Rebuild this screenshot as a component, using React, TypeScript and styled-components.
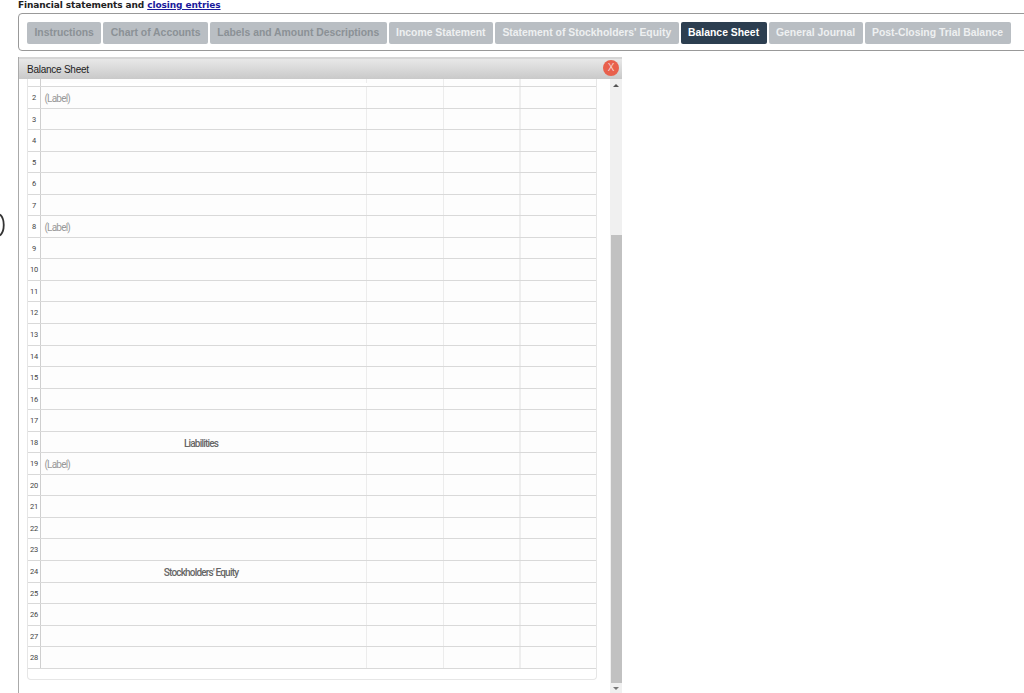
import styled, { createGlobalStyle } from "styled-components";

const GlobalStyle = createGlobalStyle`
  html, body {
    margin: 0;
    padding: 0;
    background: #fff;
    overflow: hidden;
  }
`;

const Page = styled.div`
  position: relative;
  width: 1024px;
  height: 693px;
  overflow: hidden;
  padding-left: 18px;
  box-sizing: border-box;
`;

const Heading = styled.div`
  height: 13px;
  font-family: "DejaVu Sans", sans-serif;
  font-size: 9px;
  font-weight: 700;
  letter-spacing: -0.1px;
  line-height: 10px;
  color: #222;

  a {
    color: #1a1a9c;
  }
`;

const TabBox = styled.div`
  display: flex;
  gap: 2px;
  width: 1030px;
  height: 38px;
  box-sizing: border-box;
  padding: 8px;
  border: 1px solid #999;
  border-radius: 4px;
`;

const Tab = styled.div<{ $active?: boolean; $faded?: boolean }>`
  height: 22px;
  padding: 0 7.45px;
  border-radius: 2px;
  background: ${(p) => (p.$active ? "#2c3e50" : "#b9bec3")};
  color: ${(p) => (p.$active ? "#fff" : p.$faded ? "#eef0f1" : "#8b9196")};
  font-family: "Liberation Sans", sans-serif;
  font-size: 10.4px;
  font-weight: 700;
  line-height: 21px;
  white-space: nowrap;
`;

const Window = styled.div`
  display: flex;
  flex-direction: column;
  width: 604px;
  height: 641px;
  margin-top: 6px;
  box-sizing: border-box;
  border-left: 1px solid #aaa;
  background: #fff;
`;

const TitleBar = styled.div`
  display: flex;
  align-items: center;
  justify-content: space-between;
  flex: none;
  height: 22px;
  padding: 0 3px 0 8px;
  box-sizing: border-box;
  border-top: 2px solid #d6d6d6;
  background: linear-gradient(#e8e8e8, #c9c9c9);
  font-family: "Liberation Sans", sans-serif;
  font-size: 10px;
  letter-spacing: -0.25px;
  color: #222;
`;

const CloseButton = styled.div`
  width: 16px;
  height: 16px;
  margin-top: -3px;
  border-radius: 50%;
  background: #e8604c;
  color: #f6d5cf;
  font-family: "Liberation Sans", sans-serif;
  font-size: 10px;
  line-height: 16px;
  text-align: center;
`;

const WindowBody = styled.div`
  display: flex;
  flex: 1;
  min-height: 0;
  padding-left: 8px;
`;

const Sheet = styled.div`
  width: 571px;
  height: 601px;
  box-sizing: border-box;
  border: 1px solid #e6e6e6;
  border-top: none;
  border-radius: 0 0 4px 4px;
  padding-bottom: 12px;
`;

const Row = styled.div<{ $clipped?: boolean }>`
  display: grid;
  grid-template-columns: 13px 326px 77px 77px 1fr;
  height: ${(p) => (p.$clipped ? "8px" : "21.55px")};
  box-sizing: border-box;
  border-bottom: 1px solid #d9d9d9;
  overflow: hidden;
`;

const NumberCell = styled.div`
  border-right: 1px solid #cfcfcf;
  background: #fff;
  color: #444;
  font-family: "Roboto", sans-serif;
  font-size: 7.5px;
  line-height: 22px;
  text-align: center;
  letter-spacing: -0.3px;
`;

const LabelCell = styled.div<{ $heading?: boolean; $clipped?: boolean }>`
  padding: ${(p) => (p.$heading ? "0 5px 0 0" : "0 0 0 3.5px")};
  background: #fdfdfd;
  border-right: 1px solid #ececec;
  color: ${(p) => (p.$heading ? "#666" : "#999")};
  font-family: "Roboto", sans-serif;
  font-size: 10px;
  font-weight: ${(p) => (p.$heading ? 500 : 400)};
  letter-spacing: -0.8px;
  line-height: ${(p) => (p.$clipped ? "0" : "23px")};
  text-align: ${(p) => (p.$heading ? "center" : "left")};
  white-space: nowrap;
  transform: ${(p) => (p.$clipped ? "translateY(-3px)" : "none")};
`;

const AmountCell = styled.div<{ $wide?: boolean }>`
  background: #fdfdfd;
  border-right: ${(p) => (p.$wide ? "2px solid #eeeeee" : "1px solid #ececec")};
`;

const EndCell = styled.div`
  background: #fdfdfd;
`;

const ScrollTrack = styled.div`
  display: flex;
  flex-direction: column;
  align-items: stretch;
  width: 12px;
  height: 619px;
  margin-left: 13px;
  background: #f0f0f0;
`;

const ScrollArrow = styled.div<{ $down?: boolean }>`
  flex: none;
  width: 0;
  height: 0;
  margin: ${(p) => (p.$down ? "4px auto 0" : "5px auto 0")};
  border-left: 3px solid transparent;
  border-right: 3px solid transparent;
  border-bottom: ${(p) => (p.$down ? "none" : "3px solid #555")};
  border-top: ${(p) => (p.$down ? "3px solid #777" : "none")};
`;

const ScrollSpace = styled.div`
  flex: none;
  height: 148px;
`;

const ScrollThumb = styled.div`
  flex: none;
  height: 448px;
  margin-left: 1px;
  background: #c1c1c1;
`;

const EdgeMark = styled.svg`
  position: absolute;
  left: 0;
  top: 213px;
`;

type RowData = { n: number; label?: string; heading?: boolean };

const rows: RowData[] = Array.from({ length: 27 }, (_, i) => {
  const n = i + 2;
  if (n === 2 || n === 8 || n === 19) return { n, label: "(Label)" };
  if (n === 18) return { n, label: "Liabilities", heading: true };
  if (n === 24) return { n, label: "Stockholders' Equity", heading: true };
  return { n };
});

const tabs = [
  { name: "Instructions" },
  { name: "Chart of Accounts" },
  { name: "Labels and Amount Descriptions" },
  { name: "Income Statement", faded: true },
  { name: "Statement of Stockholders' Equity", faded: true },
  { name: "Balance Sheet", active: true },
  { name: "General Journal", faded: true },
  { name: "Post-Closing Trial Balance", faded: true },
];

export default function App() {
  return (
    <Page>
      <GlobalStyle />
      <EdgeMark width="6" height="24" viewBox="0 0 6 24">
        <path d="M0 1.5 C5 6 5 18 0 22.5" fill="none" stroke="#333" strokeWidth="1.8" />
      </EdgeMark>
      <Heading>
        Financial statements and <a href="#closing">closing entries</a>
      </Heading>
      <TabBox>
        {tabs.map((t) => (
          <Tab key={t.name} $active={t.active} $faded={t.faded}>
            {t.name}
          </Tab>
        ))}
      </TabBox>
      <Window>
        <TitleBar>
          Balance Sheet
          <CloseButton>X</CloseButton>
        </TitleBar>
        <WindowBody>
          <Sheet>
            <Row $clipped>
              <NumberCell />
              <LabelCell $heading $clipped>
                Assets
              </LabelCell>
              <AmountCell />
              <AmountCell $wide />
              <EndCell />
            </Row>
            {rows.map((r) => (
              <Row key={r.n}>
                <NumberCell>{r.n}</NumberCell>
                <LabelCell $heading={r.heading}>{r.label}</LabelCell>
                <AmountCell />
                <AmountCell $wide />
                <EndCell />
              </Row>
            ))}
          </Sheet>
          <ScrollTrack>
            <ScrollArrow />
            <ScrollSpace />
            <ScrollThumb />
            <ScrollArrow $down />
          </ScrollTrack>
        </WindowBody>
      </Window>
    </Page>
  );
}
